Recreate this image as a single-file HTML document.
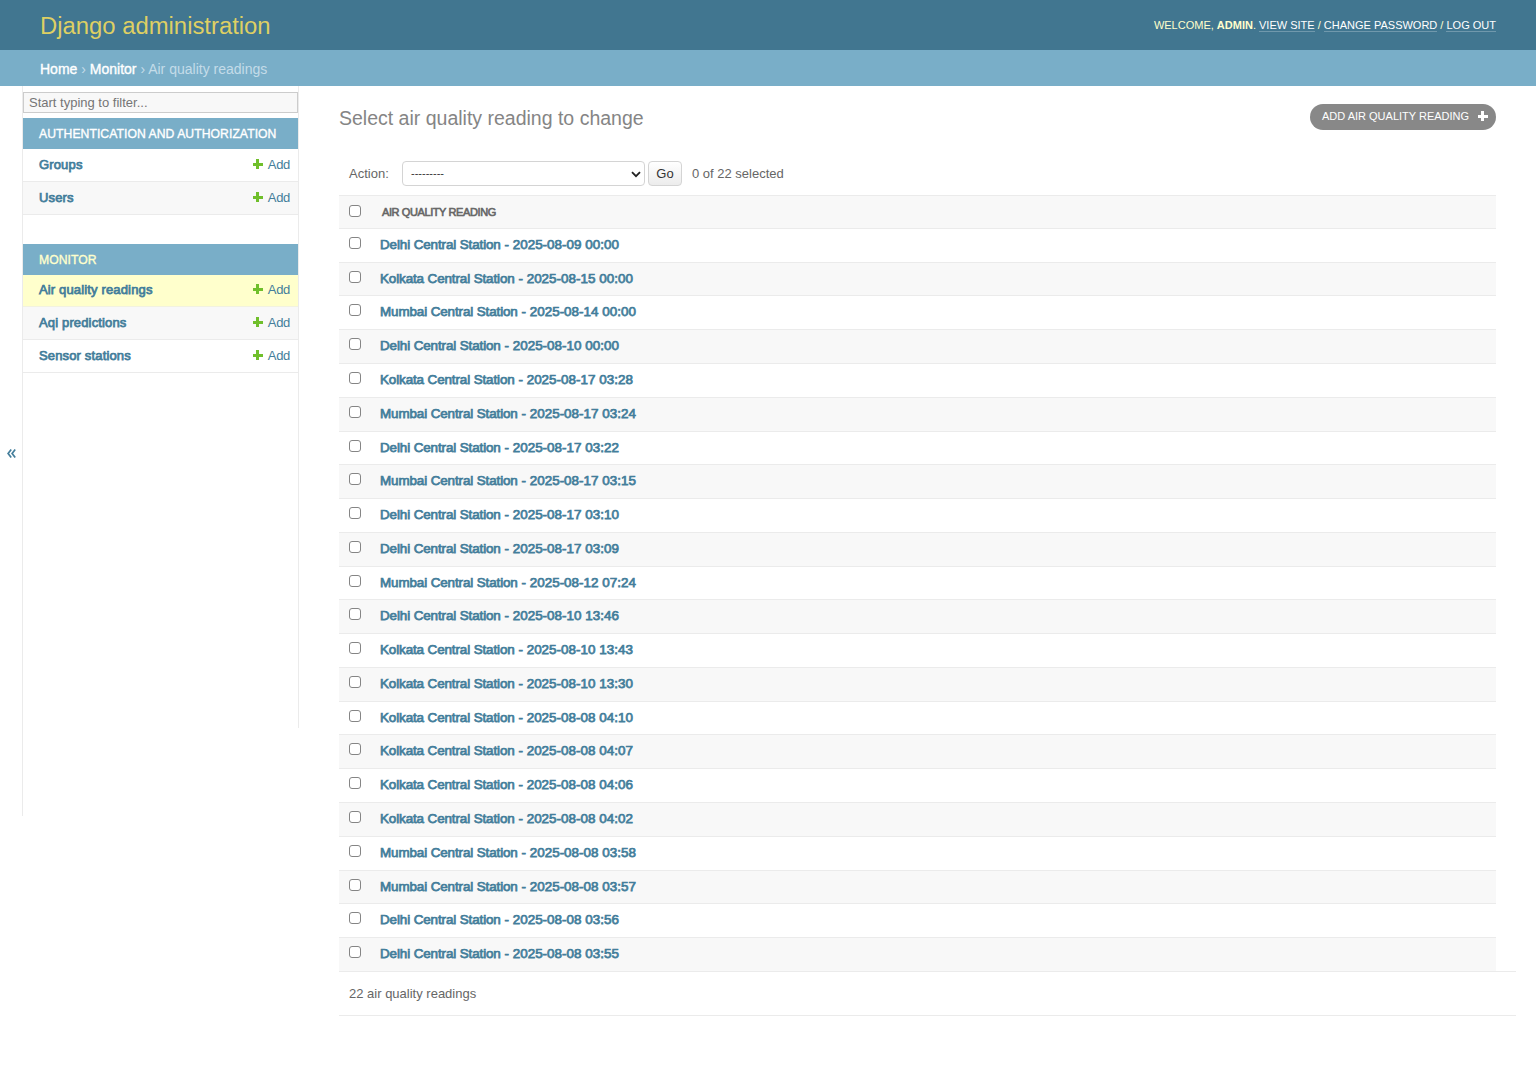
<!DOCTYPE html>
<html><head><meta charset="utf-8">
<style>
*{box-sizing:border-box}
html,body{margin:0;padding:0;width:1536px;height:1086px;overflow:hidden;background:#fff;font-family:"Liberation Sans",sans-serif;color:#333}
.abs{position:absolute}
#header{position:absolute;left:0;top:0;width:1536px;height:50px;background:#417690}
#brand{position:absolute;left:40px;top:13px;font-size:23.85px;line-height:26px;color:rgba(245,221,93,0.88);white-space:nowrap}
#usertools{position:absolute;right:40px;top:18px;font-size:11px;line-height:14px;letter-spacing:0;color:#ffc;white-space:nowrap;text-transform:uppercase}
#usertools a{color:#fff;text-decoration:none;border-bottom:1px solid rgba(255,255,255,0.25)}
#crumbs{position:absolute;left:0;top:50px;width:1536px;height:36px;background:#79aec8;color:#c4dce8;font-size:14px}
#crumbs .t{position:absolute;left:40px;top:11px;line-height:16px;white-space:nowrap}
#crumbs a{color:#fff;text-decoration:none;-webkit-text-stroke:0.35px #fff}
#toggle{position:absolute;left:0;top:86px;width:23px;height:730px;border-right:1px solid #ebebeb;color:#447e9b}
#toggle span{position:absolute;left:6px;top:355px;font-size:20px;line-height:20px}
#sidebar{position:absolute;left:23px;top:86px;width:276px;height:642px;border-right:1px solid #ebebeb}
#filter{position:absolute;left:0;top:6px;width:275px;height:21px;border:1px solid #ccc;background:#f8f8f8;font-size:13px;color:#757575;padding:0 5px;line-height:19px;white-space:nowrap}
.cap{position:absolute;left:0;width:275px;height:30px;background:#79aec8;color:#fff;font-size:12.2px;font-weight:normal;-webkit-text-stroke:0.35px currentColor;letter-spacing:0.05px;text-transform:uppercase;padding-left:16px;line-height:30px;white-space:nowrap}
.srow{position:absolute;left:0;width:275px;border-bottom:1px solid #ebebeb;font-size:13px;line-height:32px;padding-left:16px;white-space:nowrap}
.srow b{color:#447e9b;font-weight:normal;-webkit-text-stroke:0.75px currentColor;letter-spacing:0.15px}
.srow .add{position:absolute;right:8px;top:0;color:#447e9b;letter-spacing:-0.3px}
.plus{display:inline-block;width:10px;height:10px;position:relative;margin-right:5px;vertical-align:0}
.plus:before{content:"";position:absolute;left:3.5px;top:0;width:3px;height:10px;background:#70bf2b}
.plus:after{content:"";position:absolute;left:0;top:3.5px;width:10px;height:3px;background:#70bf2b}
.grey{background:#f8f8f8}
#content{position:absolute;left:0;top:0;width:1536px;height:1086px}
#h1{position:absolute;left:339px;top:106px;font-size:19.5px;line-height:24px;color:#858585;white-space:nowrap}
#otools{position:absolute;left:1310px;top:104px;width:186px;height:26px;border-radius:13px;background:#888;color:#fff;font-size:11px;line-height:24px;padding-left:12px;text-transform:uppercase;white-space:nowrap}
.wplus{position:absolute;left:167.5px;top:7px;width:10px;height:10px}
.wplus:before{content:"";position:absolute;left:3.5px;top:0;width:3px;height:10px;background:#fff}
.wplus:after{content:"";position:absolute;left:0;top:3.5px;width:10px;height:3px;background:#fff}
#actlabel{position:absolute;left:349px;top:166px;font-size:13px;line-height:16px;color:#666;white-space:nowrap}
#sel{position:absolute;left:402px;top:161px;width:243px;height:25px;border:1px solid #d4d4d4;border-radius:4px;background:#fff;font-size:11px;line-height:23px;padding-left:8px;color:#333}
#sel svg{position:absolute;right:3px;top:9px}
#gobtn{position:absolute;left:648px;top:161px;width:34px;height:25px;border:1px solid #d4d4d4;border-radius:4px;background:linear-gradient(#fff,#ececec);font-size:13px;line-height:23px;text-align:center;color:#333}
#counter{position:absolute;left:692px;top:166px;font-size:13px;line-height:16px;color:#666;white-space:nowrap}
#thead{position:absolute;left:339px;top:195px;width:1157px;height:34px;border-top:1px solid #ebebeb;border-bottom:1px solid #ebebeb;background:#f8f8f8}
#thead .cb{position:absolute;left:10px;top:9px;margin:0;width:12px;height:12px}
#thead span{position:absolute;left:43px;top:9px;font-size:11px;line-height:14px;font-weight:normal;-webkit-text-stroke:0.6px currentColor;letter-spacing:-0.4px;color:#666;text-transform:uppercase;white-space:nowrap}
.row{position:absolute;left:339px;width:1157px;height:33.77px;border-bottom:1px solid #ebebeb}
.row .cb{position:absolute;left:10px;top:8px;margin:0;width:12px;height:12px}
.row a{position:absolute;left:41px;top:8px;font-size:13.4px;line-height:16px;font-weight:normal;-webkit-text-stroke:0.75px currentColor;letter-spacing:0.03px;word-spacing:0;color:#447e9b;white-space:nowrap}
.nm{letter-spacing:-0.1px}
.cb{display:block;border:1.2px solid #858585;border-radius:3px;background:#fff}
#pag{position:absolute;left:339px;top:971px;width:1177px;height:45px;border-top:1px solid #ebebeb;border-bottom:1px solid #ebebeb;padding-left:10px;font-size:13px;line-height:43px;color:#666;white-space:nowrap}
</style></head><body>
<div id="header">
  <div id="brand">Django administration</div>
  <div id="usertools">Welcome, <b>admin</b>. <a>View site</a> / <a>Change password</a> / <a>Log out</a></div>
</div>
<div id="crumbs"><div class="t"><a>Home</a> › <a>Monitor</a> › Air quality readings</div></div>
<div id="toggle"><svg style="position:absolute;left:0;top:0" width="22" height="729" viewBox="0 86 22 729"><path d="M11.2 449.4 L8.1 453.5 L11.2 457.6 M15.2 449.4 L12.1 453.5 L15.2 457.6" fill="none" stroke="#447e9b" stroke-width="1.7" stroke-linecap="butt"/></svg></div>
<div id="sidebar">
  <div id="filter">Start typing to filter...</div>
  <div class="cap" style="top:32px;height:31px;line-height:33px">Authentication and Authorization</div>
  <div class="srow" style="top:63px;height:33px;line-height:31px"><b>Groups</b><span class="add"><i class="plus"></i>Add</span></div>
  <div class="srow grey" style="top:96px;height:33px;line-height:31px"><b>Users</b><span class="add"><i class="plus"></i>Add</span></div>
  <div class="cap" style="top:158px;height:31px;line-height:33px;color:#ffc">Monitor</div>
  <div class="srow" style="top:189px;height:32px;line-height:30px;background:#ffc;border-bottom-color:#f2f2e0"><b>Air quality readings</b><span class="add"><i class="plus"></i>Add</span></div>
  <div class="srow grey" style="top:221px;height:33px;line-height:32px"><b>Aqi predictions</b><span class="add"><i class="plus"></i>Add</span></div>
  <div class="srow" style="top:254px;height:33px;line-height:32px"><b>Sensor stations</b><span class="add"><i class="plus"></i>Add</span></div>
</div>
<div id="content">
  <div id="h1">Select air quality reading to change</div>
  <div id="otools">Add air quality reading<i class="wplus"></i></div>
  <div id="actlabel">Action:</div>
  <div id="sel">---------<svg width="10" height="7" viewBox="0 0 10 7"><path d="M1 1.2 L5 5.2 L9 1.2" fill="none" stroke="#222" stroke-width="1.8"/></svg></div>
  <div id="gobtn">Go</div>
  <div id="counter">0 of 22 selected</div>
  <div id="thead"><i class="cb"></i><span>Air quality reading</span></div>
  <div class="row" style="top:228.90px"><i class="cb"></i><a><span class="nm">Delhi Central Station</span> - 2025-08-09 00:00</a></div>
  <div class="row grey" style="top:262.67px"><i class="cb"></i><a><span class="nm">Kolkata Central Station</span> - 2025-08-15 00:00</a></div>
  <div class="row" style="top:296.44px"><i class="cb"></i><a><span class="nm">Mumbai Central Station</span> - 2025-08-14 00:00</a></div>
  <div class="row grey" style="top:330.21px"><i class="cb"></i><a><span class="nm">Delhi Central Station</span> - 2025-08-10 00:00</a></div>
  <div class="row" style="top:363.98px"><i class="cb"></i><a><span class="nm">Kolkata Central Station</span> - 2025-08-17 03:28</a></div>
  <div class="row grey" style="top:397.75px"><i class="cb"></i><a><span class="nm">Mumbai Central Station</span> - 2025-08-17 03:24</a></div>
  <div class="row" style="top:431.52px"><i class="cb"></i><a><span class="nm">Delhi Central Station</span> - 2025-08-17 03:22</a></div>
  <div class="row grey" style="top:465.29px"><i class="cb"></i><a><span class="nm">Mumbai Central Station</span> - 2025-08-17 03:15</a></div>
  <div class="row" style="top:499.06px"><i class="cb"></i><a><span class="nm">Delhi Central Station</span> - 2025-08-17 03:10</a></div>
  <div class="row grey" style="top:532.83px"><i class="cb"></i><a><span class="nm">Delhi Central Station</span> - 2025-08-17 03:09</a></div>
  <div class="row" style="top:566.60px"><i class="cb"></i><a><span class="nm">Mumbai Central Station</span> - 2025-08-12 07:24</a></div>
  <div class="row grey" style="top:600.37px"><i class="cb"></i><a><span class="nm">Delhi Central Station</span> - 2025-08-10 13:46</a></div>
  <div class="row" style="top:634.14px"><i class="cb"></i><a><span class="nm">Kolkata Central Station</span> - 2025-08-10 13:43</a></div>
  <div class="row grey" style="top:667.91px"><i class="cb"></i><a><span class="nm">Kolkata Central Station</span> - 2025-08-10 13:30</a></div>
  <div class="row" style="top:701.68px"><i class="cb"></i><a><span class="nm">Kolkata Central Station</span> - 2025-08-08 04:10</a></div>
  <div class="row grey" style="top:735.45px"><i class="cb"></i><a><span class="nm">Kolkata Central Station</span> - 2025-08-08 04:07</a></div>
  <div class="row" style="top:769.22px"><i class="cb"></i><a><span class="nm">Kolkata Central Station</span> - 2025-08-08 04:06</a></div>
  <div class="row grey" style="top:802.99px"><i class="cb"></i><a><span class="nm">Kolkata Central Station</span> - 2025-08-08 04:02</a></div>
  <div class="row" style="top:836.76px"><i class="cb"></i><a><span class="nm">Mumbai Central Station</span> - 2025-08-08 03:58</a></div>
  <div class="row grey" style="top:870.53px"><i class="cb"></i><a><span class="nm">Mumbai Central Station</span> - 2025-08-08 03:57</a></div>
  <div class="row" style="top:904.30px"><i class="cb"></i><a><span class="nm">Delhi Central Station</span> - 2025-08-08 03:56</a></div>
  <div class="row grey" style="top:938.07px"><i class="cb"></i><a><span class="nm">Delhi Central Station</span> - 2025-08-08 03:55</a></div>
  <div id="pag">22 air quality readings</div>
</div>
</body></html>
